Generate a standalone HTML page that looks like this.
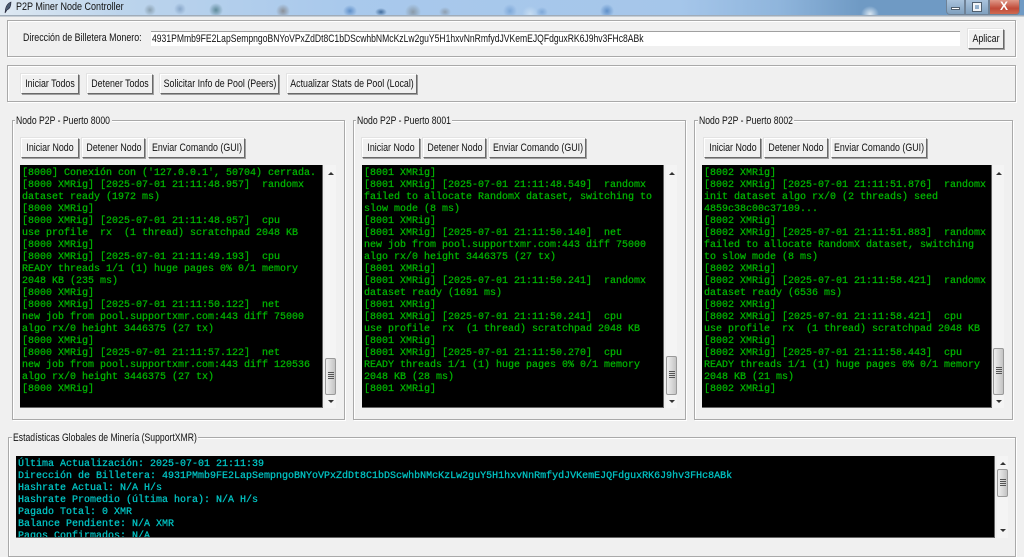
<!DOCTYPE html>
<html><head><meta charset="utf-8"><title>P2P Miner Node Controller</title>
<style>
html,body{margin:0;padding:0}
body{width:1024px;height:544px;overflow:hidden;position:relative;background:#f0f0f0;font:10.8px/14px "Liberation Sans",sans-serif;color:#111}
div,pre,span{position:absolute;box-sizing:border-box;margin:0}
b{font-weight:normal;position:absolute;white-space:nowrap;left:0;top:0;transform:scaleX(.82);transform-origin:0 50%}
.title{left:0;top:0;width:1024px;height:16px;background:
radial-gradient(ellipse 7px 6px at 350px 11px,#5f8fc8,transparent),radial-gradient(ellipse 6px 4px at 381px 12px,#3f6a9a,transparent),radial-gradient(ellipse 8px 8px at 413px 12px,#8a9aa8,transparent),radial-gradient(ellipse 6px 5px at 445px 12px,#8f9fb0,transparent),radial-gradient(ellipse 7px 7px at 510px 11px,#7ea8d8,transparent),radial-gradient(ellipse 6px 5px at 542px 12px,#7ea8d8,transparent),radial-gradient(ellipse 7px 7px at 607px 11px,#5f8fc8,transparent),radial-gradient(ellipse 6px 6px at 150px 10px,#8aa0b0,transparent),radial-gradient(ellipse 7px 7px at 216px 10px,#5f8a9a,transparent),radial-gradient(ellipse 7px 7px at 283px 11px,#8a9098,transparent),radial-gradient(ellipse 6px 6px at 180px 9px,#88a6c8,transparent),radial-gradient(ellipse 8px 8px at 530px 14px,#c5dcf2,transparent),radial-gradient(ellipse 9px 8px at 870px 14px,#d8e6f2,transparent),
linear-gradient(90deg,#dfe9f2 0,#bcd4ec 120px,#a9c9ec 340px,#a5c6ea 680px,#8fb5dc 780px,#6f9ac4 860px,#6f9ac4 1024px)}
.tline{left:0;top:15px;width:1024px;height:2px;background:linear-gradient(#8d9cac,#d8dde2)}
.ttext{left:16px;top:0;height:15px;width:120px;color:#111}
.ttext b{line-height:15px;font-size:11px}
.frame,.group{border:1px solid #a9a9a9;box-shadow:inset 1px 1px 0 #fff,1px 1px 0 #fff}
.legend{background:#f0f0f0;height:14px}
.legend b{left:1px;transform:scaleX(.8)}
.btn{height:20px;background:#f0f0f0;border-right:1px solid #696969;border-bottom:1px solid #696969;border-top:1px solid #fff;border-left:1px solid #fff;box-shadow:1px 1px 0 #a0a0a0,-1px -1px 0 #e3e3e3}
.btn b{left:50%;top:2px;transform:translateX(-50%) scaleX(.82);transform-origin:50% 50%}
.lbl{height:14px;width:125px}
.entry{left:151px;top:31px;width:809px;height:15px;background:#fff;border-top:1px solid #a0a0a0}
.entry b{left:1px;transform:scaleX(.795)}
.log{background:#000;overflow:hidden;font:10px/12px "Liberation Mono",monospace;padding:3px 0 0 2px;white-space:pre;border:1px solid #666;border-width:0 1px 1px 0;-webkit-text-stroke:.25px}
.g{color:#00b400}.c{color:#00c4c4}
.sb{width:11px;background:#f4f4f4}
.thumb{left:0;width:11px;background:linear-gradient(90deg,#eee,#dcdcdc 45%,#c4c4c4);border:1px solid #9a9a9a;border-radius:2px}
.grip{left:2px;width:6px;height:1px;background:#555}
.au{left:3px;width:0;height:0;border-left:3px solid transparent;border-right:3px solid transparent;border-bottom:3px solid #333}
.ad{left:3px;width:0;height:0;border-left:3px solid transparent;border-right:3px solid transparent;border-top:3px solid #333}
.wb{top:0;height:15px;border:1px solid #6f8296;border-top:0}
</style></head><body>
<div class="title"></div><div class="tline"></div>
<svg style="position:absolute;left:2px;top:1px" width="12" height="14" viewBox="0 0 12 14"><path d="M9 1 C6 2 4 5 3.500 8 L3 12 L5 9 C7.500 8 9 5 9 1Z" fill="#4a5a70" stroke="#223" stroke-width=".6"/></svg>
<div class="ttext"><b>P2P Miner Node Controller</b></div>
<div class="wb" style="left:946px;width:19px;background:linear-gradient(#a9c3dc,#7fa0bf);border-radius:0 0 0 4px"></div>
<div style="left:951px;top:7px;width:9px;height:3px;background:#fff;border:1px solid #50606f"></div>
<div class="wb" style="left:965px;width:24px;background:linear-gradient(#a9c3dc,#7fa0bf)"></div>
<div style="left:973px;top:3px;width:8px;height:8px;border:2px solid #f2f5f8;outline:1px solid #50606f"></div>
<div class="wb" style="left:989px;width:31px;background:linear-gradient(#e09a8a,#c04a38 60%,#d06a50);border-radius:0 0 4px 0"></div>
<div style="left:1000px;top:0;width:12px;height:15px;color:#fff;font:bold 12px/13px 'Liberation Sans',sans-serif">X</div>

<div class="frame" style="left:7px;top:20px;width:1009px;height:37px"></div>
<div class="lbl" style="left:23px;top:31px"><b>Dirección de Billetera Monero:</b></div>
<div class="entry"><b>4931PMmb9FE2LapSempngoBNYoVPxZdDt8C1bDScwhbNMcKzLw2guY5H1hxvNnRmfydJVKemEJQFdguxRK6J9hv3FHc8ABk</b></div>
<div class="btn" style="left:968px;top:29px;width:36px"><b>Aplicar</b></div>

<div class="frame" style="left:7px;top:65px;width:1009px;height:37px"></div>
<div class="btn" style="left:21px;top:74px;width:58px"><b>Iniciar Todos</b></div>
<div class="btn" style="left:87px;top:74px;width:66px"><b>Detener Todos</b></div>
<div class="btn" style="left:160px;top:74px;width:119px"><b>Solicitar Info de Pool (Peers)</b></div>
<div class="btn" style="left:287px;top:74px;width:130px"><b>Actualizar Stats de Pool (Local)</b></div>

<!-- Node 1 -->
<div class="group" style="left:12px;top:120px;width:333px;height:300px"></div>
<div class="legend" style="left:15px;top:114px;width:97px"><b>Nodo P2P - Puerto 8000</b></div>
<div class="btn" style="left:21px;top:138px;width:58px"><b>Iniciar Nodo</b></div>
<div class="btn" style="left:82px;top:138px;width:63px"><b>Detener Nodo</b></div>
<div class="btn" style="left:148px;top:138px;width:97px"><b>Enviar Comando (GUI)</b></div>
<pre class="log g" style="left:20px;top:165px;width:303px;height:243px">[8000] Conexión con ('127.0.0.1', 50704) cerrada.
[8000 XMRig] [2025-07-01 21:11:48.957]  randomx
dataset ready (1972 ms)
[8000 XMRig]
[8000 XMRig] [2025-07-01 21:11:48.957]  cpu
use profile  rx  (1 thread) scratchpad 2048 KB
[8000 XMRig]
[8000 XMRig] [2025-07-01 21:11:49.193]  cpu
READY threads 1/1 (1) huge pages 0% 0/1 memory
2048 KB (235 ms)
[8000 XMRig]
[8000 XMRig] [2025-07-01 21:11:50.122]  net
new job from pool.supportxmr.com:443 diff 75000
algo rx/0 height 3446375 (27 tx)
[8000 XMRig]
[8000 XMRig] [2025-07-01 21:11:57.122]  net
new job from pool.supportxmr.com:443 diff 120536
algo rx/0 height 3446375 (27 tx)
[8000 XMRig]</pre>
<div class="sb" style="left:325px;top:165px;height:243px"><div class="au" style="top:7px"></div><div class="thumb" style="top:193px;height:37px"><div class="grip" style="top:13px"></div><div class="grip" style="top:15px"></div><div class="grip" style="top:17px"></div><div class="grip" style="top:19px"></div></div><div class="ad" style="top:235px"></div></div>

<!-- Node 2 -->
<div class="group" style="left:353px;top:120px;width:333px;height:300px"></div>
<div class="legend" style="left:356px;top:114px;width:96px"><b>Nodo P2P - Puerto 8001</b></div>
<div class="btn" style="left:362px;top:138px;width:58px"><b>Iniciar Nodo</b></div>
<div class="btn" style="left:423px;top:138px;width:63px"><b>Detener Nodo</b></div>
<div class="btn" style="left:489px;top:138px;width:97px"><b>Enviar Comando (GUI)</b></div>
<pre class="log g" style="left:362px;top:165px;width:302px;height:243px">[8001 XMRig]
[8001 XMRig] [2025-07-01 21:11:48.549]  randomx
failed to allocate RandomX dataset, switching to
slow mode (8 ms)
[8001 XMRig]
[8001 XMRig] [2025-07-01 21:11:50.140]  net
new job from pool.supportxmr.com:443 diff 75000
algo rx/0 height 3446375 (27 tx)
[8001 XMRig]
[8001 XMRig] [2025-07-01 21:11:50.241]  randomx
dataset ready (1691 ms)
[8001 XMRig]
[8001 XMRig] [2025-07-01 21:11:50.241]  cpu
use profile  rx  (1 thread) scratchpad 2048 KB
[8001 XMRig]
[8001 XMRig] [2025-07-01 21:11:50.270]  cpu
READY threads 1/1 (1) huge pages 0% 0/1 memory
2048 KB (28 ms)
[8001 XMRig]</pre>
<div class="sb" style="left:666px;top:165px;height:243px"><div class="au" style="top:7px"></div><div class="thumb" style="top:191px;height:39px"><div class="grip" style="top:14px"></div><div class="grip" style="top:16px"></div><div class="grip" style="top:18px"></div><div class="grip" style="top:20px"></div></div><div class="ad" style="top:235px"></div></div>

<!-- Node 3 -->
<div class="group" style="left:694px;top:120px;width:319px;height:300px"></div>
<div class="legend" style="left:698px;top:114px;width:96px"><b>Nodo P2P - Puerto 8002</b></div>
<div class="btn" style="left:704px;top:138px;width:57px"><b>Iniciar Nodo</b></div>
<div class="btn" style="left:764px;top:138px;width:64px"><b>Detener Nodo</b></div>
<div class="btn" style="left:831px;top:138px;width:96px"><b>Enviar Comando (GUI)</b></div>
<pre class="log g" style="left:702px;top:165px;width:290px;height:243px">[8002 XMRig]
[8002 XMRig] [2025-07-01 21:11:51.876]  randomx
init dataset algo rx/0 (2 threads) seed
4859c38c00c37109...
[8002 XMRig]
[8002 XMRig] [2025-07-01 21:11:51.883]  randomx
failed to allocate RandomX dataset, switching
to slow mode (8 ms)
[8002 XMRig]
[8002 XMRig] [2025-07-01 21:11:58.421]  randomx
dataset ready (6536 ms)
[8002 XMRig]
[8002 XMRig] [2025-07-01 21:11:58.421]  cpu
use profile  rx  (1 thread) scratchpad 2048 KB
[8002 XMRig]
[8002 XMRig] [2025-07-01 21:11:58.443]  cpu
READY threads 1/1 (1) huge pages 0% 0/1 memory
2048 KB (21 ms)
[8002 XMRig]</pre>
<div class="sb" style="left:993px;top:165px;height:243px"><div class="au" style="top:7px"></div><div class="thumb" style="top:183px;height:47px"><div class="grip" style="top:18px"></div><div class="grip" style="top:20px"></div><div class="grip" style="top:22px"></div><div class="grip" style="top:24px"></div></div><div class="ad" style="top:235px"></div></div>

<!-- Global -->
<div class="group" style="left:8px;top:437px;width:1008px;height:120px"></div>
<div class="legend" style="left:12px;top:431px;width:186px"><b>Estadísticas Globales de Minería (SupportXMR)</b></div>
<pre class="log c" style="left:16px;top:456px;width:979px;height:82px">Última Actualización: 2025-07-01 21:11:39
Dirección de Billetera: 4931PMmb9FE2LapSempngoBNYoVPxZdDt8C1bDScwhbNMcKzLw2guY5H1hxvNnRmfydJVKemEJQFdguxRK6J9hv3FHc8ABk
Hashrate Actual: N/A H/s
Hashrate Promedio (última hora): N/A H/s
Pagado Total: 0 XMR
Balance Pendiente: N/A XMR
Pagos Confirmados: N/A</pre>
<div class="sb" style="left:997px;top:456px;height:82px"><div class="au" style="top:6px"></div><div class="thumb" style="top:13px;height:28px"><div class="grip" style="top:9px"></div><div class="grip" style="top:11px"></div><div class="grip" style="top:13px"></div><div class="grip" style="top:15px"></div></div><div class="ad" style="top:73px"></div></div>
</body></html>
